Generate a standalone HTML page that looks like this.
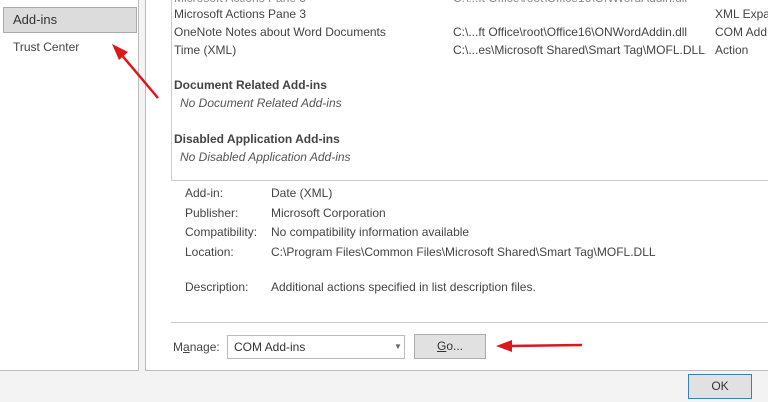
<!DOCTYPE html>
<html><head><style>
*{margin:0;padding:0;box-sizing:border-box}
body{width:768px;height:402px;background:#f3f3f3;position:relative;overflow:hidden;font-family:"Liberation Sans",sans-serif;font-size:12px;color:#444}
.a{position:absolute;white-space:nowrap}
.b{font-weight:bold;color:#444}
.i{font-style:italic;color:#555}
</style></head><body>
<div class="a" style="left:0;top:0;width:139px;height:371px;background:#fff;border-right:1px solid #bbb;border-bottom:1px solid #bbb"></div>
<div class="a" style="left:3px;top:7px;width:134px;height:26px;background:#dcdcdc;border:1px solid #aaa"></div>
<div class="a" style="left:13px;top:12px;font-size:13px;color:#333">Add-ins</div>
<div class="a" style="left:13px;top:40px">Trust Center</div>
<div class="a" style="left:145px;top:0;width:623px;height:371px;background:#fff;border-left:1px solid #bbb;border-bottom:1px solid #bbb"></div>
<div class="a" style="left:171px;top:-1px;width:600px;height:182px;border:1px solid #ccc;background:#fff"></div>
<div class="a" style="left:174px;top:-9px;color:#888">Microsoft Actions Pane 3</div>
<div class="a" style="left:453px;top:-9px;color:#888">C:\...ft Office\root\Office16\ONWordAddin.dll</div>
<div class="a" style="left:174px;top:7px">Microsoft Actions Pane 3</div>
<div class="a" style="left:174px;top:25px">OneNote Notes about Word Documents</div>
<div class="a" style="left:174px;top:43px">Time (XML)</div>
<div class="a" style="left:453px;top:25px">C:\...ft Office\root\Office16\ONWordAddin.dll</div>
<div class="a" style="left:453px;top:43px">C:\...es\Microsoft Shared\Smart Tag\MOFL.DLL</div>
<div class="a" style="left:715px;top:7px">XML Expa</div>
<div class="a" style="left:715px;top:25px">COM Add</div>
<div class="a" style="left:715px;top:43px">Action</div>
<div class="a b" style="left:174px;top:78px">Document Related Add-ins</div>
<div class="a i" style="left:180px;top:96px">No Document Related Add-ins</div>
<div class="a b" style="left:174px;top:132px">Disabled Application Add-ins</div>
<div class="a i" style="left:180px;top:150px">No Disabled Application Add-ins</div>
<div class="a" style="left:185px;top:186px">Add-in:</div>
<div class="a" style="left:271px;top:186px">Date (XML)</div>
<div class="a" style="left:185px;top:206px">Publisher:</div>
<div class="a" style="left:271px;top:206px">Microsoft Corporation</div>
<div class="a" style="left:185px;top:225px">Compatibility:</div>
<div class="a" style="left:271px;top:225px">No compatibility information available</div>
<div class="a" style="left:185px;top:245px">Location:</div>
<div class="a" style="left:271px;top:245px">C:\Program Files\Common Files\Microsoft Shared\Smart Tag\MOFL.DLL</div>
<div class="a" style="left:185px;top:280px">Description:</div>
<div class="a" style="left:271px;top:280px">Additional actions specified in list description files.</div>
<div class="a" style="left:171px;top:322px;width:597px;height:1px;background:#ccc"></div>
<div class="a" style="left:173px;top:340px">M<u>a</u>nage:</div>
<div class="a" style="left:227px;top:335px;width:178px;height:24px;border:1px solid #bbb;background:#fff"></div>
<div class="a" style="left:234px;top:340px;color:#333">COM Add-ins</div>
<div class="a" style="left:394px;top:342px;font-size:8px;color:#666">▼</div>
<div class="a" style="left:414px;top:334px;width:72px;height:25px;border:1px solid #adadad;background:#e1e1e1;text-align:center;line-height:23px;color:#333"><u>G</u>o...</div>
<div class="a" style="left:688px;top:374px;width:64px;height:25px;border:1px solid #3c7fb1;background:#e1e1e1;text-align:center;line-height:23px;color:#333">OK</div>
<svg class="a" style="left:0;top:0" width="768" height="402">
<g stroke="#d9191c" stroke-width="2.5" fill="#d9191c">
<line x1="158" y1="98" x2="120" y2="53"/>
<polygon points="112,44 128,52 119,60" stroke="none"/>
<line x1="582" y1="345" x2="508" y2="346"/>
<polygon points="496,346 512,340 512,352" stroke="none"/>
</g></svg>
</body></html>
